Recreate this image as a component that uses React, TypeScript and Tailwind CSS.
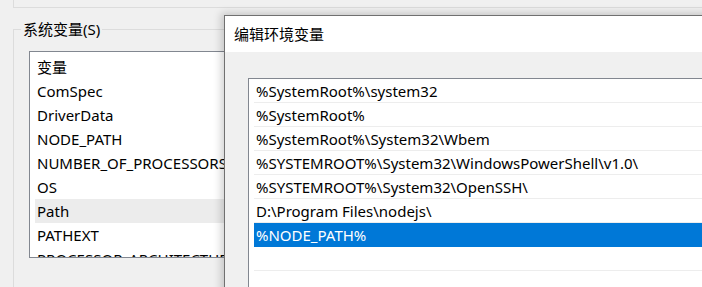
const font = { fontFamily: '"Noto Sans", "Noto Sans CJK SC", sans-serif' };

const vars = [
  "变量",
  "ComSpec",
  "DriverData",
  "NODE_PATH",
  "NUMBER_OF_PROCESSORS",
  "OS",
  "Path",
  "PATHEXT",
  "PROCESSOR_ARCHITECTURE",
];

const paths = [
  "%SystemRoot%\\system32",
  "%SystemRoot%",
  "%SystemRoot%\\System32\\Wbem",
  "%SYSTEMROOT%\\System32\\WindowsPowerShell\\v1.0\\",
  "%SYSTEMROOT%\\System32\\OpenSSH\\",
  "D:\\Program Files\\nodejs\\",
  "%NODE_PATH%",
  "",
  "",
];

export default function App() {
  return (
    <div
      className="relative w-[702px] h-[287px] overflow-hidden bg-[#f0f0f0] text-[15px] text-black"
      style={font}
    >
      {/* user variables group box (bottom edge only visible) */}
      <div className="ml-[13px] h-[8px] border-l border-b border-[#dcdcdc]" />

      {/* system variables group box */}
      <div className="relative mt-[21px] ml-[13px] h-[300px] border-l border-t border-[#dcdcdc] pl-[15px] pt-[21px]">
        <div className="absolute left-[7px] -top-[12px] bg-[#f0f0f0] px-[2px] leading-[22px]">
          系统变量(S)
        </div>
        <div className="w-[400px] h-[207px] border border-[#828790] bg-white pl-[5px] pt-[3px] overflow-hidden">
          {vars.map((v) => (
            <div
              key={v}
              className={
                "h-[24px] leading-[24px] pl-[2px] whitespace-nowrap " +
                (v === "Path" ? "bg-[#ececec]" : "")
              }
            >
              {v}
            </div>
          ))}
        </div>
      </div>

      {/* edit environment variable dialog */}
      <div className="absolute left-[224px] top-[15px] w-[520px] h-[300px] border border-[#707070] bg-[#f0f0f0] shadow-[-3px_-2px_8px_rgba(0,0,0,0.18)]">
        <div className="h-[36px] bg-white pl-[9px] leading-[36px]">编辑环境变量</div>
        <div className="pl-[23px] pt-[26px]">
          <div className="h-[260px] border-l border-t border-[#828790] bg-white pl-[5px]">
            {paths.map((p, i) => (
              <div
                key={i}
                className={
                  "h-[24px] pt-[2px] leading-[21px] pl-[2px] whitespace-nowrap border-b " +
                  (p === "%NODE_PATH%"
                    ? "bg-[#0078d7] text-white border-[#0078d7]"
                    : "border-[#ededed]")
                }
              >
                {p}
              </div>
            ))}
          </div>
        </div>
      </div>
    </div>
  );
}
